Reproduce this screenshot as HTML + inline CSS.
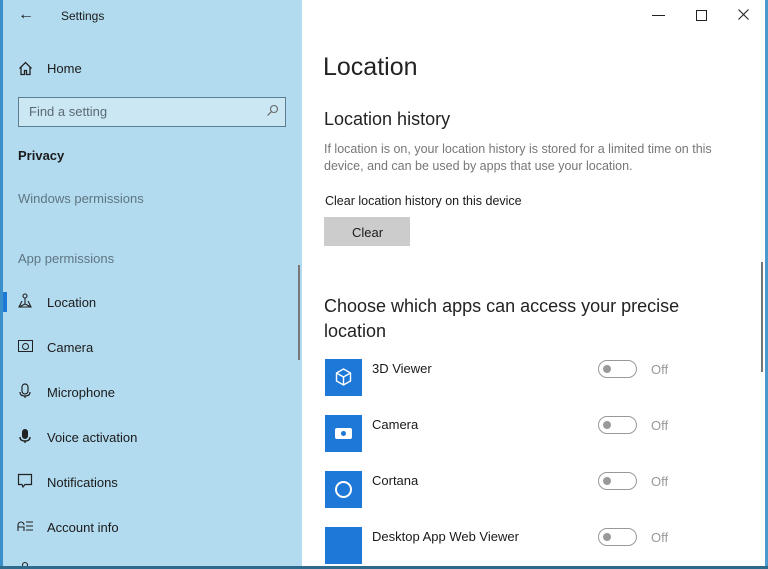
<!DOCTYPE html>
<html><head><style>
body{margin:0;width:768px;height:569px;overflow:hidden;font-family:"Liberation Sans",sans-serif;position:relative;background:#fff}
.side{position:absolute;left:0;top:0;width:302px;height:569px;background:#b2dbef}
.t{position:absolute;white-space:nowrap;color:#1a1a1a}
.edge{position:absolute;left:0;top:0;width:3px;height:569px;background:#3a8fc8}
.bot{position:absolute;left:0;top:566px;width:768px;height:3px;background:#2d6a8c}
.rb{position:absolute;right:0;top:0;width:3px;height:569px;background:#4a9ad0}
.ic{position:absolute;left:325px;width:37px;height:37px;background:#1e78d7}
.tg{position:absolute;left:598px;width:37px;height:16px;border:1.5px solid #999;border-radius:10px}
.tg:after{content:"";position:absolute;left:4px;top:4px;width:8px;height:8px;border-radius:50%;background:#9a9a9a}
.off{position:absolute;left:651px;color:#999;font-size:13px}
</style></head><body>
<div class="side"></div>
<div class="edge"></div>
<div class="rb"></div>
<div class="t" style="left:18px;top:6px;font-size:16px">←</div>
<div class="t" style="left:61px;top:9px;font-size:12px">Settings</div>
<svg style="position:absolute;left:18px;top:61px" width="15" height="15" viewBox="0 0 15 15"><path d="M1.5 7.5L7.5 1.5L13.5 7.5M3 6v7.5h3.5v-4h2v4H12V6" fill="none" stroke="#222" stroke-width="1.3"/></svg>
<div class="t" style="left:47px;top:61px;font-size:13px">Home</div>
<div style="position:absolute;left:18px;top:97px;width:266px;height:28px;border:1px solid #5c7e93;background:#cce7f4"></div>
<div class="t" style="left:29px;top:104px;font-size:13px;color:#5a6a73">Find a setting</div>
<svg style="position:absolute;left:266px;top:104px" width="13" height="13" viewBox="0 0 13 13"><circle cx="8" cy="5" r="3.5" fill="none" stroke="#666" stroke-width="1.1"/><path d="M5.5 7.5L1.5 11.5" stroke="#666" stroke-width="1.2"/></svg>
<div class="t" style="left:18px;top:148px;font-size:13px;font-weight:bold">Privacy</div>
<div class="t" style="left:18px;top:191px;font-size:13px;color:#5f7581">Windows permissions</div>
<div class="t" style="left:18px;top:251px;font-size:13px;color:#5f7581">App permissions</div>
<div style="position:absolute;left:3px;top:292px;width:4px;height:20px;background:#1e78d7"></div>
<div style="position:absolute;left:298px;top:265px;width:2px;height:95px;background:#777"></div>
<svg style="position:absolute;left:17px;top:293px" width="16" height="16" viewBox="0 0 16 16"><circle cx="8" cy="3" r="2" fill="none" stroke="#222" stroke-width="1.1"/><path d="M8 5v6M5 8L2 14h12L11 8M2 14l6-3 6 3" fill="none" stroke="#222" stroke-width="1.1"/></svg>
<div class="t" style="left:47px;top:295px;font-size:13px">Location</div>
<div style="position:absolute;left:18px;top:340px;width:13px;height:10px;border:1.3px solid #222"></div>
<div style="position:absolute;left:22px;top:343px;width:5px;height:5px;border:1.2px solid #222;border-radius:50%"></div>
<div class="t" style="left:47px;top:340px;font-size:13px">Camera</div>
<svg style="position:absolute;left:18px;top:383px" width="14" height="16" viewBox="0 0 14 16"><rect x="4" y="1" width="6" height="10" rx="3" fill="none" stroke="#222" stroke-width="1.2"/><path d="M2 9c0 3 2 4 5 4s5-1 5-4M7 13v2" fill="none" stroke="#222" stroke-width="1.2"/></svg>
<div class="t" style="left:47px;top:385px;font-size:13px">Microphone</div>
<svg style="position:absolute;left:18px;top:428px" width="14" height="16" viewBox="0 0 14 16"><rect x="4" y="1" width="6" height="10" rx="3" fill="#222"/><path d="M2 9c0 3 2 4 5 4s5-1 5-4M7 13v2" fill="none" stroke="#222" stroke-width="1.4"/></svg>
<div class="t" style="left:47px;top:430px;font-size:13px">Voice activation</div>
<svg style="position:absolute;left:17px;top:473px" width="16" height="16" viewBox="0 0 16 16"><path d="M1.5 1.5h13v10H8l-2 2.5-1-2.5H1.5z" fill="none" stroke="#222" stroke-width="1.2"/></svg>
<div class="t" style="left:47px;top:475px;font-size:13px">Notifications</div>
<svg style="position:absolute;left:17px;top:520px" width="18" height="12" viewBox="0 0 18 12"><path d="M1 11V5a3 3 0 0 1 6 0M1 7h6v4M9 2h7M9 6h7M9 10h7" fill="none" stroke="#222" stroke-width="1.1"/></svg>
<div class="t" style="left:47px;top:520px;font-size:13px">Account info</div>
<svg style="position:absolute;left:18px;top:561px" width="14" height="8"><circle cx="7" cy="4" r="2.5" fill="none" stroke="#222" stroke-width="1.1"/></svg>

<div style="position:absolute;left:652px;top:15px;width:13px;height:1px;background:#222"></div>
<div style="position:absolute;left:696px;top:10px;width:9px;height:9px;border:1px solid #222"></div>
<svg style="position:absolute;left:738px;top:9px" width="11" height="11"><path d="M0.5 0.5l10 10M10.5 0.5l-10 10" stroke="#222" stroke-width="1.1"/></svg>
<div class="t" style="left:323px;top:53px;font-size:25px;color:#222">Location</div>
<div class="t" style="left:324px;top:109px;font-size:18px;color:#222">Location history</div>
<div class="t" style="left:324px;top:141px;font-size:12.5px;color:#777;line-height:17px">If location is on, your location history is stored for a limited time on this<br>device, and can be used by apps that use your location.</div>
<div class="t" style="left:325px;top:194px;font-size:12.5px">Clear location history on this device</div>
<div style="position:absolute;left:324px;top:217px;width:86px;height:29px;background:#ccc"></div>
<div class="t" style="left:352px;top:225px;font-size:13px">Clear</div>
<div class="t" style="left:324px;top:294px;font-size:18px;line-height:25px;color:#222">Choose which apps can access your precise<br>location</div>
<div style="position:absolute;left:761px;top:262px;width:2px;height:110px;background:#777"></div>

<div class="ic" style="top:359px"><svg width="37" height="37"><path d="M18.5 10l7 4v8l-7 4-7-4v-8zM11.5 14l7 4 7-4M18.5 18v8" fill="none" stroke="#fff" stroke-width="1.4"/></svg></div>
<div class="t" style="left:372px;top:361px;font-size:13px">3D Viewer</div>
<div class="tg" style="top:360px"></div><div class="off" style="top:362px">Off</div>
<div class="ic" style="top:415px"><div style="position:absolute;left:10px;top:13px;width:17px;height:11px;background:#fff;border-radius:2px"></div><div style="position:absolute;left:16px;top:16px;width:5px;height:5px;background:#1e78d7;border-radius:50%"></div></div>
<div class="t" style="left:372px;top:417px;font-size:13px">Camera</div>
<div class="tg" style="top:416px"></div><div class="off" style="top:418px">Off</div>
<div class="ic" style="top:471px"><div style="position:absolute;left:10px;top:10px;width:13px;height:13px;border:2.5px solid #fff;border-radius:50%"></div></div>
<div class="t" style="left:372px;top:473px;font-size:13px">Cortana</div>
<div class="tg" style="top:472px"></div><div class="off" style="top:474px">Off</div>
<div class="ic" style="top:527px"></div>
<div class="t" style="left:372px;top:529px;font-size:13px">Desktop App Web Viewer</div>
<div class="tg" style="top:528px"></div><div class="off" style="top:530px">Off</div>
<div class="bot"></div>
</body></html>
